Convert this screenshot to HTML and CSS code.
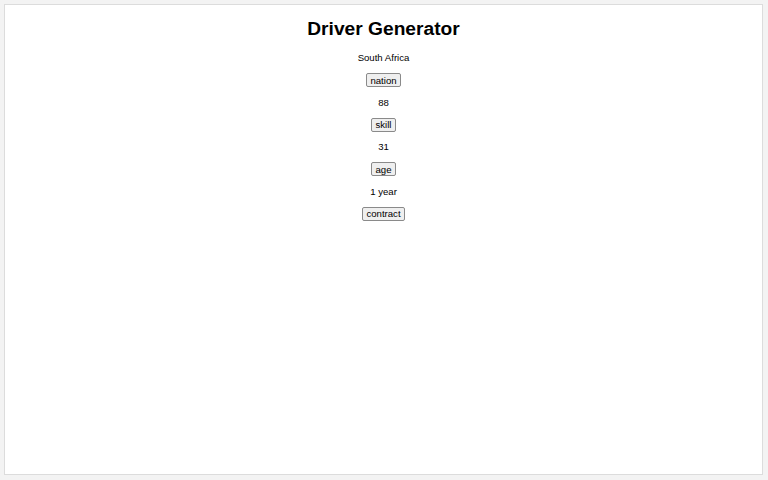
FILE: index.html
```html
<!DOCTYPE html>
<html lang="en">
<head>
<meta charset="utf-8">
<title>Driver Generator</title>
<link rel="stylesheet" href="styles.css">
</head>
<body>
<main class="page">
  <h1 class="title">Driver Generator</h1>
  <p class="value">South Africa</p>
  <p class="action"><button class="btn">nation</button></p>
  <p class="value">88</p>
  <p class="action"><button class="btn">skill</button></p>
  <p class="value">31</p>
  <p class="action"><button class="btn">age</button></p>
  <p class="value">1 year</p>
  <p class="action"><button class="btn">contract</button></p>
</main>
</body>
</html>
```
FILE: styles.css
```css
html, body {
  margin: 0;
  padding: 0;
  height: 100%;
}
html {
  background: #f3f3f3;
}
body {
  box-sizing: border-box;
  padding: 4px 5px 5px 4px;
  font-family: "Liberation Sans", Arial, sans-serif;
  font-size: 9.6px;
  color: #000;
}
.page {
  box-sizing: border-box;
  height: 100%;
  background: #fff;
  border: 1px solid #dcdcdc;
  display: flex;
  flex-direction: column;
  align-items: center;
}
.title {
  font-size: 19.2px;
  font-weight: bold;
  line-height: 22px;
  margin: 13px 0 12px;
}
.value {
  margin: 0;
  height: 11px;
  line-height: 11px;
  margin-bottom: 10.5px;
}
.action {
  margin: 0;
  height: 13px;
  display: flex;
  align-items: center;
  margin-bottom: 10px;
}
.btn {
  box-sizing: border-box;
  font-family: "Liberation Sans", Arial, sans-serif;
  font-size: 9.6px;
  line-height: 11px;
  height: 14px;
  padding: 0 3.5px;
  background: #efefef;
  color: #000;
  border: 1px solid #8a8a8a;
  border-radius: 2px;
}
```
